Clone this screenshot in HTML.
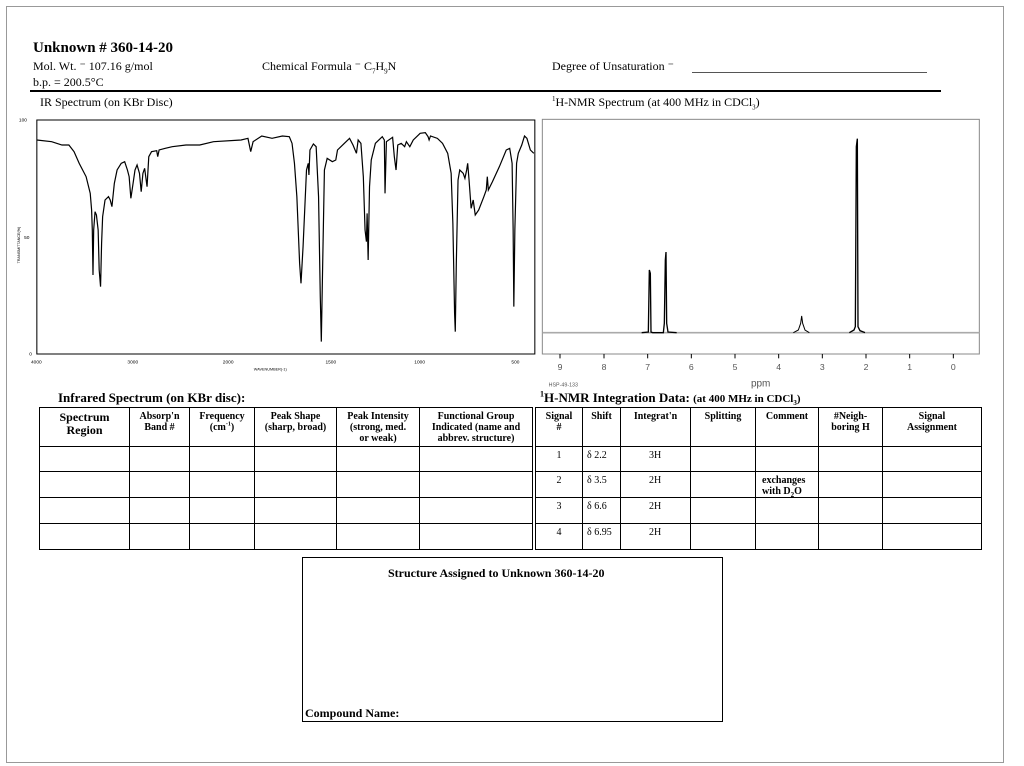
<!DOCTYPE html>
<html><head><meta charset="utf-8"><style>
body{margin:0;background:#fff;width:1024px;height:766px;position:relative;overflow:hidden;font-family:"Liberation Serif",serif;color:#000}
.a{position:absolute;white-space:nowrap}
table{position:absolute;border-collapse:collapse;font-family:"Liberation Serif",serif;table-layout:fixed}
td{border:1.5px solid #000;padding:3px 0 0 0;text-align:center;vertical-align:top;font-size:10px;font-weight:bold;line-height:11px;overflow:hidden}
.n td{font-weight:normal;font-size:10px;text-align:left;padding-left:4px}
sup,sub{line-height:0}
</style></head><body>
<div class="a" style="left:6px;top:6px;width:996px;height:755px;border:1px solid #999"></div>
<div class="a" style="left:33px;top:40px;font-size:15px;font-weight:bold">Unknown # 360-14-20</div>
<div class="a" style="left:33px;top:59px;font-size:12px">Mol. Wt. ⁻ 107.16 g/mol</div>
<div class="a" style="left:33px;top:75px;font-size:12px">b.p. = 200.5°C</div>
<div class="a" style="left:262px;top:59px;font-size:12px">Chemical Formula ⁻ C<sub style="font-size:7px">7</sub>H<sub style="font-size:7px">9</sub>N</div>
<div class="a" style="left:552px;top:59px;font-size:12px">Degree of Unsaturation ⁻</div>
<div class="a" style="left:692px;top:72px;width:235px;border-top:1px solid #555"></div>
<div class="a" style="left:30px;top:90px;width:911px;border-top:2.5px solid #000"></div>
<div class="a" style="left:40px;top:95px;font-size:12px">IR Spectrum (on KBr Disc)</div>
<div class="a" style="left:552px;top:95px;font-size:12px"><sup style="font-size:7px">1</sup>H-NMR Spectrum (at 400 MHz in CDCl<sub style="font-size:7px">3</sub>)</div>

<svg class="a" style="left:0;top:30px" width="540" height="350" viewBox="0 0 1568 1050" preserveAspectRatio="none">
<rect x="107" y="270" width="1446" height="702" fill="none" stroke="#000" stroke-width="3"/>
<polyline fill="none" stroke="#000" stroke-width="3.5" points="107,330 150,335 180,345 200,345 215,365 230,400 250,440 262,490 266,540 268,600 270,735 272,600 276,545 280,555 285,600 288,720 292,770 295,640 298,560 305,510 315,500 320,510 325,530 332,460 340,420 352,400 362,395 370,420 375,440 380,505 385,470 392,420 398,405 405,430 410,485 415,430 420,415 427,470 432,380 440,365 455,362 458,380 462,360 480,355 500,350 540,345 580,345 620,335 700,330 720,325 728,365 735,335 760,318 790,325 820,318 840,320 848,340 855,400 862,500 870,700 874,760 880,650 890,420 895,400 897,435 900,360 910,342 918,350 925,500 930,800 933,935 937,700 942,420 950,385 965,395 975,390 980,360 1000,340 1015,325 1025,345 1035,370 1040,330 1048,340 1055,440 1060,600 1064,635 1066,550 1069,690 1073,470 1078,390 1090,340 1110,320 1116,330 1118,490 1122,335 1140,322 1145,380 1150,420 1155,345 1165,340 1175,350 1180,335 1190,350 1200,330 1220,310 1235,308 1243,320 1246,330 1250,318 1270,325 1285,340 1300,370 1310,430 1315,580 1320,850 1322,905 1325,700 1330,450 1335,420 1345,430 1350,445 1355,420 1358,400 1362,450 1368,535 1374,510 1380,555 1390,540 1405,500 1412,480 1415,440 1418,480 1430,455 1450,410 1470,360 1480,355 1487,400 1490,600 1492,830 1495,600 1500,400 1505,370 1515,345 1523,318 1530,325 1540,360 1550,370"/>
<g font-family="Liberation Sans" font-size="14" fill="#000">
<text x="55" y="275">100</text><text x="70" y="627">50</text><text x="85" y="977">0</text>
<text x="90" y="1000">4000</text><text x="370" y="1000">3000</text><text x="647" y="1000">2000</text><text x="945" y="1000">1500</text><text x="1203" y="1000">1000</text><text x="1485" y="1000">500</text>
<text x="737" y="1022" font-size="11">WAVENUMBER(-1)</text>
<text x="58" y="700" font-size="11" transform="rotate(-90 58 700)">TRANSMITTANCE(%)</text>
</g>
</svg>

<svg class="a" style="left:530px;top:40px" width="460" height="350" viewBox="0 0 1380 1050" preserveAspectRatio="none">
<rect x="37" y="238" width="1311" height="704" fill="none" stroke="#888" stroke-width="3"/>
<line x1="37" y1="878" x2="1348" y2="878" stroke="#aaa" stroke-width="5"/>
<polyline fill="none" stroke="#000" stroke-width="4" points="335,878 355,876 358,690 361,700 363,876 368,878 400,878 403,850 406,660 408,636 410,850 414,876 440,878"/>
<polyline fill="none" stroke="#000" stroke-width="3" points="790,878 805,870 812,850 815,828 818,850 825,870 838,878"/>
<polyline fill="none" stroke="#000" stroke-width="4" points="958,878 972,870 976,860 979,320 982,296 984,860 990,872 1005,878"/>
<g stroke="#000" stroke-width="3">
<line x1="90" y1="942" x2="90" y2="955"/><line x1="222" y1="942" x2="222" y2="955"/><line x1="353" y1="942" x2="353" y2="955"/><line x1="484" y1="942" x2="484" y2="955"/><line x1="615" y1="942" x2="615" y2="955"/><line x1="746" y1="942" x2="746" y2="955"/><line x1="877" y1="942" x2="877" y2="955"/><line x1="1008" y1="942" x2="1008" y2="955"/><line x1="1139" y1="942" x2="1139" y2="955"/><line x1="1270" y1="942" x2="1270" y2="955"/>
</g>
<g font-family="Liberation Sans" font-size="26" fill="#555" text-anchor="middle">
<text x="90" y="990">9</text><text x="222" y="990">8</text><text x="353" y="990">7</text><text x="484" y="990">6</text><text x="615" y="990">5</text><text x="746" y="990">4</text><text x="877" y="990">3</text><text x="1008" y="990">2</text><text x="1139" y="990">1</text><text x="1270" y="990">0</text>
<text x="692" y="1040" font-size="30">ppm</text>
<text x="100" y="1040" font-size="16">HSP-49-133</text>
</g>
</svg>

<div class="a" style="left:58px;top:390px;font-size:13px;font-weight:bold">Infrared Spectrum (on KBr disc):</div>
<div class="a" style="left:540px;top:390px;font-size:13px;font-weight:bold"><sup style="font-size:8px">1</sup>H-NMR Integration Data: <span style="font-size:11px">(at 400 MHz in CDCl<sub style="font-size:7px">3</sub>)</span></div>

<table style="left:39px;top:407px;width:494px">
<tr style="height:39px"><td style="width:89px;font-size:12px;line-height:13px">Spectrum<br>Region</td><td style="width:59px">Absorp'n<br>Band #</td><td style="width:64px">Frequency<br>(cm<sup style="font-size:6px">-1</sup>)</td><td style="width:81px">Peak Shape<br>(sharp, broad)</td><td style="width:82px">Peak Intensity<br>(strong, med.<br>or weak)</td><td>Functional Group<br>Indicated (name and<br>abbrev. structure)</td></tr>
<tr style="height:25px"><td></td><td></td><td></td><td></td><td></td><td></td></tr>
<tr style="height:26px"><td></td><td></td><td></td><td></td><td></td><td></td></tr>
<tr style="height:26px"><td></td><td></td><td></td><td></td><td></td><td></td></tr>
<tr style="height:26px"><td></td><td></td><td></td><td></td><td></td><td></td></tr>
</table>
<div class="a" style="left:532px;top:407px;height:143px;border-left:1.5px solid #000"></div>

<table style="left:535px;top:407px;width:447px">
<tr style="height:39px"><td style="width:46px">Signal<br>#</td><td style="width:37px">Shift</td><td style="width:69px">Integrat'n</td><td style="width:64px">Splitting</td><td style="width:62px">Comment</td><td style="width:63px">#Neigh-<br>boring H</td><td>Signal<br>Assignment</td></tr>
<tr style="height:25px" class="n"><td style="text-align:center;padding-left:0">1</td><td>δ 2.2</td><td style="padding-left:28px">3H</td><td></td><td></td><td></td><td></td></tr>
<tr style="height:26px" class="n"><td style="text-align:center;padding-left:0">2</td><td>δ 3.5</td><td style="padding-left:28px">2H</td><td></td><td style="font-weight:bold;padding-left:6px">exchanges<br>with D<sub style="font-size:7px">2</sub>O</td><td></td><td></td></tr>
<tr style="height:26px" class="n"><td style="text-align:center;padding-left:0">3</td><td>δ 6.6</td><td style="padding-left:28px">2H</td><td></td><td></td><td></td><td></td></tr>
<tr style="height:26px" class="n"><td style="text-align:center;padding-left:0">4</td><td>δ 6.95</td><td style="padding-left:28px">2H</td><td></td><td></td><td></td><td></td></tr>
</table>

<div class="a" style="left:302px;top:557px;width:419px;height:163px;border:1.5px solid #000"></div>
<div class="a" style="left:388px;top:566px;font-size:12px;font-weight:bold">Structure Assigned to Unknown 360-14-20</div>
<div class="a" style="left:305px;top:706px;font-size:12px;font-weight:bold">Compound Name:</div>
</body></html>
